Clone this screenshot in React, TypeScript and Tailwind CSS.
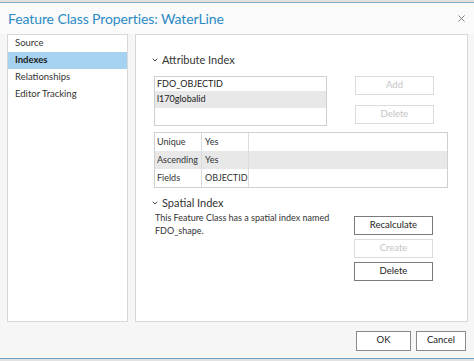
import { ChevronDown, X } from "lucide-react";

const font = { fontFamily: 'Lato, "Open Sans", sans-serif' };

function Btn({ label, disabled = false }: { label: string; disabled?: boolean }) {
  return (
    <div
      className={
        "w-[79px] h-[19px] flex items-center justify-center text-[9.5px] bg-white border " +
        (disabled ? "border-[#dcdcdc] text-[#c4c4c4]" : "border-[#7a7a7a] text-[#222]")
      }
    >
      {label}
    </div>
  );
}

function Section({ title }: { title: string }) {
  return (
    <div className="flex items-center gap-[3px] text-[11px] text-[#333]">
      <ChevronDown className="w-[8px] h-[8px] text-[#444]" strokeWidth={3} />
      <span>{title}</span>
    </div>
  );
}

export default function App() {
  const navItems = ["Source", "Indexes", "Relationships", "Editor Tracking"];
  const props = [
    { k: "Unique", v: "Yes" },
    { k: "Ascending", v: "Yes" },
    { k: "Fields", v: "OBJECTID" },
  ];

  return (
    <div className="w-[474px] h-[361px] flex flex-col bg-[#f6f6f6] overflow-hidden" style={font}>
      {/* window strip */}
      <div className="h-[2px] bg-[#e4e1da]" />
      <div className="h-px bg-[#7fb0cf]" />

      {/* title */}
      <div className="h-[31px] flex items-center justify-between pl-[8px] pr-[7px] bg-[#fafafa]">
        <span className="text-[14px] text-[#2a8ac6] tracking-[-0.1px]">
          Feature Class Properties: WaterLine
        </span>
        <X className="w-[11px] h-[11px] text-[#777]" strokeWidth={2} />
      </div>

      {/* body */}
      <div className="flex-1 flex gap-[7px] pl-[7px] pr-[6px]">
        <div className="w-[121px] bg-white border border-[#d8d8d8]">
          {navItems.map((n) => (
            <div
              key={n}
              className={
                "h-[17px] flex items-center pl-[7px] text-[9.5px] " +
                (n === "Indexes" ? "bg-[#a5d2f0] text-[#1a1a1a] font-bold" : "text-[#333]")
              }
            >
              {n}
            </div>
          ))}
        </div>

        <div className="flex-1 bg-white border border-[#d8d8d8] pt-[17px] pl-[15px] pr-[19px]">
          <Section title="Attribute Index" />

          <div className="flex mt-[7px] pl-[3px]">
            <div className="w-[173px] h-[50px] border border-[#cfcfcf] text-[9px] text-[#222]">
              <div className="h-[14px] flex items-center pl-[2px]">FDO_OBJECTID</div>
              <div className="h-[17px] flex items-center pl-[2px] bg-[#e8e8e8]">l170globalid</div>
            </div>
            <div className="ml-[28px] flex flex-col gap-[10px]">
              <Btn label="Add" disabled />
              <Btn label="Delete" disabled />
            </div>
          </div>

          <div className="mt-[6px] ml-[3px] border border-[#cfcfcf] text-[9px] text-[#333]">
            {props.map((p, i) => (
              <div key={p.k} className={"h-[18px] flex " + (i === 1 ? "bg-[#e8e8e8]" : "")}>
                <div className="w-[47px] border-r border-[#dcdcdc] flex items-center pl-[2px]">{p.k}</div>
                <div className="w-[47px] border-r border-[#dcdcdc] flex items-center pl-[3px]">{p.v}</div>
                <div className="flex-1" />
              </div>
            ))}
          </div>

          <div className="mt-[7px]">
            <Section title="Spatial Index" />
          </div>
          <div className="flex">
            <div className="w-[196px] pl-[4px] text-[9px] leading-[13px] text-[#333]">
              This Feature Class has a spatial index named FDO_shape.
            </div>
            <div className="ml-[7px] mt-[5px] flex flex-col gap-[4px]">
              <Btn label="Recalculate" />
              <Btn label="Create" disabled />
              <Btn label="Delete" />
            </div>
          </div>
        </div>
      </div>

      {/* footer */}
      <div className="h-[36px] flex items-center justify-end gap-[5px] pr-[8px] pt-[1px]">
        <div className="w-[55px] h-[20px] flex items-center justify-center text-[9.5px] text-[#222] bg-white border border-[#8a8a8a]">
          OK
        </div>
        <div className="w-[50px] h-[20px] flex items-center justify-center text-[9.5px] text-[#222] bg-white border border-[#8a8a8a]">
          Cancel
        </div>
      </div>
      <div className="h-px bg-[#6fa6c8]" />
      <div className="h-[2px] bg-[#e2e2e2]" />
    </div>
  );
}
